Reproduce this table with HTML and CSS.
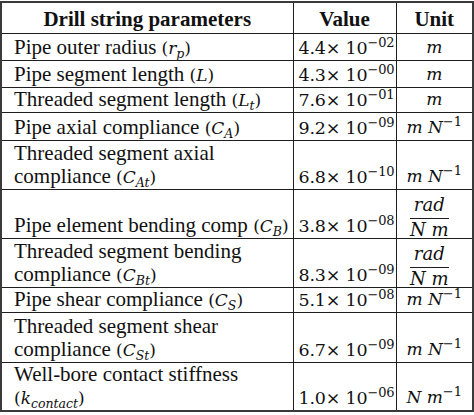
FILE: index.html
```html
<!DOCTYPE html>
<html>
<head>
<meta charset="utf-8">
<link rel="stylesheet" href="styles.css">
</head>
<body>
<table class="params">
  <colgroup>
    <col class="c-name">
    <col class="c-val">
    <col class="c-unit">
  </colgroup>
  <thead>
    <tr class="r-head">
      <th>Drill string parameters</th>
      <th>Value</th>
      <th>Unit</th>
    </tr>
  </thead>
  <tbody>
    <tr class="r-1">
      <td class="name">Pipe outer radius <span class="mp">(</span><i class="mv">r</i><sub class="ms">p</sub><span class="mp">)</span></td>
      <td class="val">4.4× 10<sup>−02</sup></td>
      <td class="unit"><i class="mv">m</i></td>
    </tr>
    <tr class="r-1">
      <td class="name">Pipe segment length <span class="mp">(</span><i class="mv">L</i><span class="mp">)</span></td>
      <td class="val">4.3× 10<sup>−00</sup></td>
      <td class="unit"><i class="mv">m</i></td>
    </tr>
    <tr class="r-short">
      <td class="name">Threaded segment length <span class="mp">(</span><i class="mv">L</i><sub class="ms">t</sub><span class="mp">)</span></td>
      <td class="val">7.6× 10<sup>−01</sup></td>
      <td class="unit"><i class="mv">m</i></td>
    </tr>
    <tr class="r-tall">
      <td class="name">Pipe axial compliance <span class="mp">(</span><i class="mv">C</i><sub class="ms">A</sub><span class="mp">)</span></td>
      <td class="val">9.2× 10<sup>−09</sup></td>
      <td class="unit"><i class="mv">m N</i><sup class="us">−1</sup></td>
    </tr>
    <tr class="r-2">
      <td class="name">Threaded segment axial<br>compliance <span class="mp">(</span><i class="mv">C</i><sub class="ms">At</sub><span class="mp">)</span></td>
      <td class="val">6.8× 10<sup>−10</sup></td>
      <td class="unit"><i class="mv">m N</i><sup class="us">−1</sup></td>
    </tr>
    <tr class="r-2">
      <td class="name nowrap">Pipe element bending comp <span class="mp">(</span><i class="mv">C</i><sub class="ms">B</sub><span class="mp">)</span></td>
      <td class="val">3.8× 10<sup>−08</sup></td>
      <td class="unit frac-cell"><span class="frac"><span class="num">rad</span><span class="den">N m</span></span></td>
    </tr>
    <tr class="r-2">
      <td class="name">Threaded segment bending<br>compliance <span class="mp">(</span><i class="mv">C</i><sub class="ms">Bt</sub><span class="mp">)</span></td>
      <td class="val">8.3× 10<sup>−09</sup></td>
      <td class="unit frac-cell"><span class="frac"><span class="num">rad</span><span class="den">N m</span></span></td>
    </tr>
    <tr class="r-short">
      <td class="name">Pipe shear compliance <span class="mp">(</span><i class="mv">C</i><sub class="ms">S</sub><span class="mp">)</span></td>
      <td class="val">5.1× 10<sup>−08</sup></td>
      <td class="unit"><i class="mv">m N</i><sup class="us">−1</sup></td>
    </tr>
    <tr class="r-2b">
      <td class="name">Threaded segment shear<br>compliance <span class="mp">(</span><i class="mv">C</i><sub class="ms">St</sub><span class="mp">)</span></td>
      <td class="val">6.7× 10<sup>−09</sup></td>
      <td class="unit"><i class="mv">m N</i><sup class="us">−1</sup></td>
    </tr>
    <tr class="r-2">
      <td class="name">Well-bore contact stiffness<br><span class="mp">(</span><i class="mv">k</i><sub class="ms">contact</sub><span class="mp">)</span></td>
      <td class="val">1.0× 10<sup>−06</sup></td>
      <td class="unit"><i class="mv">N m</i><sup class="us">−1</sup></td>
    </tr>
  </tbody>
</table>
</body>
</html>
```

FILE: styles.css
```css
html, body {
  margin: 0;
  padding: 0;
  background: #ffffff;
}

body {
  padding: 1px 0 0 0;
  font-family: "Liberation Serif", "Times New Roman", serif;
  color: #111111;
}

.params {
  font-family: "Liberation Serif", "Times New Roman", serif;
  border-collapse: collapse;
  width: 472px;
  table-layout: fixed;
  border: 2px solid #3a3a3a;
}

.c-name { width: 292px; }
.c-val { width: 103px; }
.c-unit { width: 77px; }

.params th,
.params td {
  border: 1.5px solid #1e1e1e;
  padding: 0;
  vertical-align: bottom;
  overflow: hidden;
}

.params th {
  font-weight: bold;
  font-size: 21px;
  line-height: 22px;
  text-align: center;
  padding-bottom: 3px;
}

.r-head { height: 31px; }
.r-1 { height: 27px; }
.r-short { height: 25px; }
.r-tall { height: 28px; }
.r-2 { height: 49px; }
.r-2b { height: 50px; }

.params .name {
  font-size: 21px;
  line-height: 23px;
  padding-left: 12px;
  padding-bottom: 0;
}

.params .nowrap {
  white-space: nowrap;
  padding-right: 0;
}

.mp {
  font-family: "DejaVu Serif", serif;
  font-size: 17px;
}

.mv {
  font-family: "DejaVu Serif", serif;
  font-style: italic;
  font-size: 17px;
}

.ms {
  font-family: "DejaVu Serif", serif;
  font-style: italic;
  font-size: 12.5px;
  vertical-align: -4px;
  line-height: 0;
}

.params .val {
  font-family: "DejaVu Serif", serif;
  font-size: 17.5px;
  line-height: 22px;
  padding-left: 5px;
  padding-bottom: 1px;
  white-space: nowrap;
  letter-spacing: -0.2px;
}

.val sup,
.us {
  font-family: "DejaVu Serif", serif;
  font-style: normal;
  font-size: 13px;
  vertical-align: 7px;
  line-height: 0;
}

.params .unit {
  text-align: center;
  line-height: 22px;
  padding-bottom: 1px;
  white-space: nowrap;
}

.params .frac-cell {
  vertical-align: top;
  padding-bottom: 0;
}

.frac {
  display: inline-flex;
  flex-direction: column;
  align-items: center;
  font-family: "DejaVu Serif", serif;
  font-style: italic;
  font-size: 18px;
  margin-right: 10px;
  margin-bottom: -8px;
  vertical-align: top;
}

.num {
  line-height: 20px;
  padding: 5px 4px 3px;
  border-bottom: 1.5px solid #1e1e1e;
}

.den {
  line-height: 20px;
  padding: 1px 4px 0;
}
```
